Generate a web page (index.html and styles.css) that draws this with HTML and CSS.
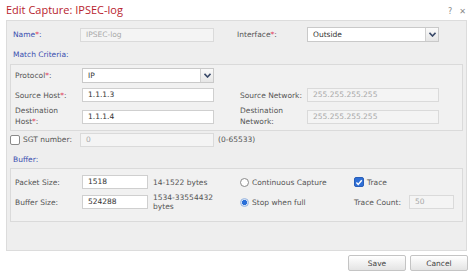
FILE: index.html
```html
<!DOCTYPE html>
<html>
<head>
<meta charset="utf-8">
<link rel="stylesheet" href="styles.css">
</head>
<body>
<div class="dialog">
  <div class="titlebar">
    <div class="title">Edit Capture: IPSEC-log</div>
    <div class="tools"><span class="help">?</span><span class="close">&#x2715;</span></div>
  </div>
  <div class="panel">
    <div class="row top-row">
      <div class="half">
        <label class="lbl lbl-name blue">Name<span class="req">*</span>:</label>
        <div class="field disabled w134">IPSEC-log</div>
      </div>
      <div class="half right">
        <label class="lbl lbl-iface">Interface<span class="req">*</span>:</label>
        <div class="select w132"><span class="val">Outside</span><span class="arrow"><svg width="7" height="5" viewBox="0 0 7 5"><path d="M0.5 0.8 L3.5 4 L6.5 0.8" fill="none" stroke="#3a4a6a" stroke-width="1.6"/></svg></span></div>
      </div>
    </div>
    <div class="section-title">Match Criteria:</div>
    <div class="box match">
      <div class="row r-proto">
        <div class="half">
          <label class="lbl lbl-in">Protocol<span class="req">*</span>:</label>
          <div class="select w132"><span class="val">IP</span><span class="arrow"><svg width="7" height="5" viewBox="0 0 7 5"><path d="M0.5 0.8 L3.5 4 L6.5 0.8" fill="none" stroke="#3a4a6a" stroke-width="1.6"/></svg></span></div>
        </div>
      </div>
      <div class="row r-src">
        <div class="half">
          <label class="lbl lbl-in">Source Host<span class="req">*</span>:</label>
          <div class="field w132">1.1.1.3</div>
        </div>
        <div class="half right2">
          <label class="lbl lbl-net">Source Network:</label>
          <div class="field disabled w132">255.255.255.255</div>
        </div>
      </div>
      <div class="row r-dst">
        <div class="half">
          <label class="lbl lbl-in two">Destination<br>Host<span class="req">*</span>:</label>
          <div class="field w132">1.1.1.4</div>
        </div>
        <div class="half right2">
          <label class="lbl lbl-net two">Destination<br>Network:</label>
          <div class="field disabled w132">255.255.255.255</div>
        </div>
      </div>
    </div>
    <div class="row sgt-row">
      <span class="cb"></span>
      <label class="lbl lbl-sgt">SGT number:</label>
      <div class="field disabled w134">0</div>
      <span class="hint">(0-65533)</span>
    </div>
    <div class="section-title buf-title">Buffer:</div>
    <div class="box buffer">
      <div class="buf-grid">
        <label class="lbl lbl-in">Packet Size:</label>
        <div class="field w66">1518</div>
        <span class="hint">14-1522 bytes</span>
        <div class="opt"><span class="radio"></span>Continuous Capture</div>
        <div class="opt"><span class="cb checked"><svg width="9" height="9" viewBox="0 0 9 9"><path d="M1.6 4.6 L3.6 6.7 L7.6 2" fill="none" stroke="#fff" stroke-width="1.6"/></svg></span>Trace</div>
        <span></span>

        <label class="lbl lbl-in">Buffer Size:</label>
        <div class="field w66">524288</div>
        <span class="hint two">1534-33554432<br>bytes</span>
        <div class="opt"><span class="radio on"></span>Stop when full</div>
        <label class="lbl">Trace Count:</label>
        <div class="field disabled w45">50</div>
      </div>
    </div>
  </div>
  <div class="footer">
    <button class="btn">Save</button>
    <button class="btn">Cancel</button>
  </div>
</div>
</body>
</html>
```
FILE: styles.css
```css
html, body {
  margin: 0;
  padding: 0;
  background: #ffffff;
}
body {
  font-family: "DejaVu Sans", Verdana, sans-serif;
  font-size: 7.5px;
  color: #555555;
  width: 474px;
  height: 276px;
  overflow: hidden;
}
.titlebar {
  display: flex;
  justify-content: space-between;
  align-items: center;
  height: 20px;
  padding: 0 8px 0 6px;
}
.title {
  font-family: "Open Sans", "Noto Sans", sans-serif;
  font-size: 11px;
  color: #b8232e;
  margin-top: -1px;
}
.tools {
  display: flex;
  gap: 7px;
  color: #8a8a8a;
  font-size: 8px;
  margin-top: 2px;
}
.panel {
  margin: 0 7px 0 6px;
  height: 231px;
  background: #eeeeee;
  border: 1px solid #dcdcdc;
  box-sizing: border-box;
  padding: 6px 3px 0 3px;
}
.row {
  display: flex;
  align-items: center;
}
.half {
  display: flex;
  align-items: center;
}
.top-row {
  padding-left: 3px;
  height: 15px;
}
.top-row .right {
  margin-left: 23px;
}
.lbl {
  color: #555555;
  line-height: 11px;
}
.blue { color: #3a4fb0; }
.req { color: #e0405a; }
.lbl-name { width: 67px; }
.lbl-iface { width: 70px; }
.lbl-in { width: 67px; }
.lbl-net { width: 67px; }
.right2 { margin-left: 26px; }
.field {
  box-sizing: border-box;
  height: 14px;
  border: 1px solid #cfcfcf;
  background: #ffffff;
  color: #333333;
  padding: 0 5px;
  line-height: 12px;
  white-space: nowrap;
}
.field.disabled {
  background: #f4f4f4;
  color: #a8a8a8;
  border-color: #dadada;
}
.w134 { width: 134px; }
.w132 { width: 132px; }
.w66 { width: 66px; }
.w45 { width: 45px; }
.select {
  box-sizing: border-box;
  height: 15px;
  border: 1px solid #c9c9c9;
  background: #ffffff;
  color: #333333;
  display: flex;
  align-items: stretch;
}
.select .val {
  flex: 1;
  padding-left: 5px;
  line-height: 13px;
}
.select .arrow {
  width: 12px;
  border-left: 1px solid #d0d0d0;
  background: linear-gradient(#fafafa, #e6e6e6);
  display: flex;
  align-items: center;
  justify-content: center;
}
.section-title {
  color: #3a4fb0;
  padding-left: 3px;
  height: 11px;
  line-height: 11px;
  margin-top: 7px;
  margin-bottom: 4px;
}
.box {
  border: 1px solid #dadada;
  background: #f1f1f1;
  box-sizing: border-box;
  padding: 0 0 0 4px;
}
.match {
  height: 67px;
  padding-top: 3px;
}
.r-proto { height: 15px; }
.r-src { height: 14px; margin-top: 5px; }
.r-dst { height: 22px; margin-top: 3px; }
.r-dst .field { margin-top: 2px; }
.sgt-row {
  height: 15px;
  margin-top: 1px;
}
.cb {
  box-sizing: border-box;
  width: 10px;
  height: 10px;
  border: 1px solid #8a8a8a;
  border-radius: 2px;
  background: #ffffff;
  display: inline-flex;
  align-items: center;
  justify-content: center;
  margin-right: 3px;
}
.cb.checked {
  background: #2f6fd6;
  border-color: #2a5fb8;
}
.lbl-sgt { width: 57px; }
.hint { margin-left: 4px; color: #555555; line-height: 9px; }
.buf-title { margin-top: 7px; margin-bottom: 3px; }
.buffer {
  height: 54px;
  padding-top: 6px;
}
.buf-grid {
  display: grid;
  grid-template-columns: 67px 66px 92px 114px 55px 45px;
  grid-template-rows: 14px 14px;
  row-gap: 6px;
  align-items: center;
}
.buf-grid .hint { margin-left: 5px; }
.opt {
  display: flex;
  align-items: center;
}
.radio {
  box-sizing: border-box;
  width: 9px;
  height: 9px;
  border-radius: 50%;
  border: 1px solid #8a8a8a;
  background: #ffffff;
  margin-right: 3px;
}
.radio.on {
  border-color: #9ab6e0;
  background: radial-gradient(circle, #2a6fd8 0 2.3px, #cfe0f7 2.6px);
}
.footer {
  display: flex;
  justify-content: flex-end;
  gap: 4px;
  padding: 4px 6px 0 0;
}
.btn {
  width: 58px;
  height: 16px;
  border: 1px solid #c4c4c4;
  border-radius: 2px;
  background: linear-gradient(#ffffff, #e4e4e4);
  font-family: "DejaVu Sans", Verdana, sans-serif;
  font-size: 7.5px;
  color: #444444;
  padding: 0;
}
```
